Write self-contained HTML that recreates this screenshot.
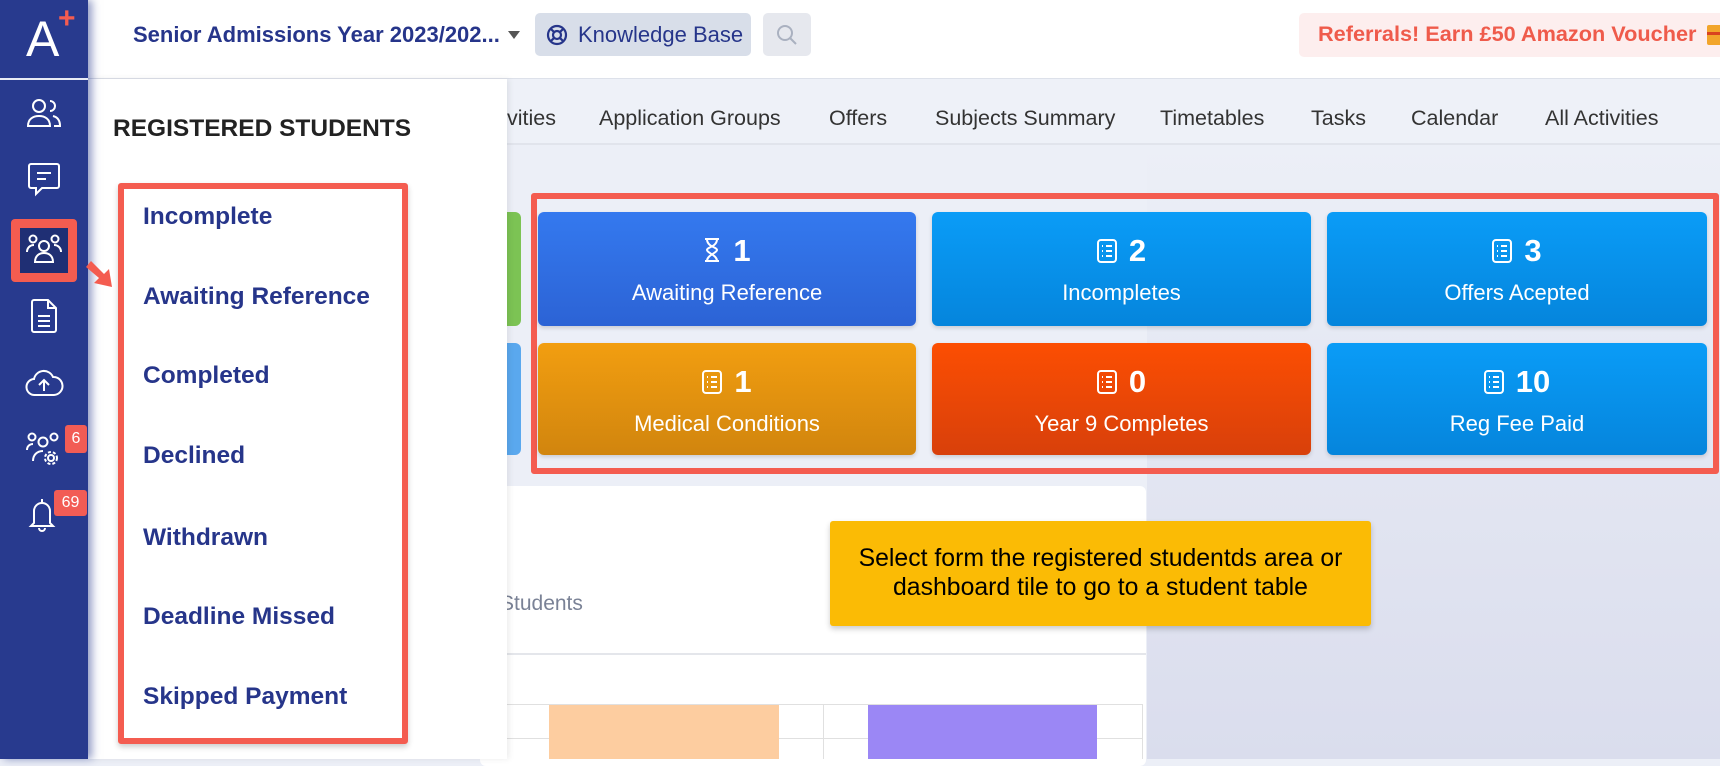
<!DOCTYPE html>
<html><head><meta charset="utf-8"><style>
*{box-sizing:border-box;margin:0;padding:0}
body{width:1720px;height:759px;overflow:hidden;font-family:"Liberation Sans",sans-serif;background:#eceff7;position:relative}
.abs{position:absolute}
.side{left:0;top:0;width:88px;height:759px;background:#283a8e;box-shadow:4px 0 8px rgba(40,58,142,.5)}
.side .sep{position:absolute;left:0;top:78px;width:88px;height:2px;background:#e8ebf5}
.ico{position:absolute;left:24px;width:40px;height:40px}
.badge{position:absolute;background:#f25c55;color:#fff;font-size:16px;text-align:center;border-radius:3px;line-height:22px}
.top{left:88px;top:0;width:1632px;height:79px;background:#fff;border-bottom:1px solid #dde1ea}
.tabs{left:507px;top:79px;width:1213px;height:66px;background:#eef1f8;border-bottom:2px solid #e1e4ec}
.tab{position:absolute;top:27px;font-size:21.5px;color:#333}
.panel{left:88px;top:79px;width:419px;height:680px;background:#fff;box-shadow:2px 0 6px rgba(0,0,0,.08)}
.item{position:absolute;left:55px;font-size:24.5px;font-weight:bold;color:#26358a}
.tile{position:absolute;border-radius:6px;color:#fff;text-align:center;box-shadow:0 2px 4px rgba(0,0,0,.15)}
.tile .n{position:absolute;top:21px;left:0;right:0;font-size:31px;font-weight:bold;line-height:36px}
.tile .l{position:absolute;top:68px;left:0;right:0;font-size:22px}
.tile svg{vertical-align:-2px;margin-right:12px}
</style></head><body>
<div class="abs" style="left:1146px;top:145px;width:574px;height:614px;background:linear-gradient(180deg,#eceff7,#dadded)"></div>
<div class="abs" style="left:507px;top:145px;width:640px;height:614px;background:#eceff7"></div>

<div class="abs top"></div>
<div class="abs" style="left:133px;top:22px;font-size:22px;font-weight:bold;color:#26358a">Senior Admissions Year 2023/202...</div>
<div class="abs" style="left:508px;top:31px;width:0;height:0;border-left:6px solid transparent;border-right:6px solid transparent;border-top:8px solid #555"></div>
<div class="abs" style="left:535px;top:13px;width:216px;height:43px;background:#d8dee9;border-radius:5px"></div>
<svg class="abs" style="left:545px;top:23px" width="24" height="24" viewBox="0 0 24 24" fill="none" stroke="#26358a" stroke-width="2.2"><circle cx="12" cy="12" r="9"/><circle cx="12" cy="12" r="4"/><path d="M5.6 5.6l3.6 3.6M18.4 5.6l-3.6 3.6M5.6 18.4l3.6-3.6M18.4 18.4l-3.6-3.6"/></svg>
<div class="abs" style="left:578px;top:22px;font-size:22px;color:#26358a">Knowledge Base</div>
<div class="abs" style="left:763px;top:13px;width:48px;height:43px;background:#e6e8ee;border-radius:5px"></div>
<svg class="abs" style="left:775px;top:23px" width="24" height="24" viewBox="0 0 24 24" fill="none" stroke="#aab1c0" stroke-width="2"><circle cx="10" cy="10" r="7"/><path d="M15 15l6 6"/></svg>
<div class="abs" style="left:1299px;top:13px;width:430px;height:44px;background:#fdeeee;border-radius:5px"></div>
<div class="abs" style="left:1318px;top:21px;font-size:21.7px;font-weight:bold;color:#ef5b4b;white-space:nowrap">Referrals! Earn £50 Amazon Voucher</div>
<div class="abs" style="left:1707px;top:25px;width:18px;height:20px;background:#f2a52b;border-radius:2px"></div>
<div class="abs" style="left:1707px;top:32px;width:18px;height:3px;background:#d9431f"></div>

<div class="abs tabs">
<div class="tab" style="left:0">vities</div>
<div class="tab" style="left:92px">Application Groups</div>
<div class="tab" style="left:322px">Offers</div>
<div class="tab" style="left:428px">Subjects Summary</div>
<div class="tab" style="left:653px">Timetables</div>
<div class="tab" style="left:804px">Tasks</div>
<div class="tab" style="left:904px">Calendar</div>
<div class="tab" style="left:1038px">All Activities</div>
</div>

<div class="abs" style="left:480px;top:212px;width:41px;height:114px;background:#7cc354;border-radius:6px"></div>
<div class="abs" style="left:480px;top:343px;width:41px;height:112px;background:#5aa8ee;border-radius:6px"></div>

<div class="abs" style="left:480px;top:486px;width:666px;height:280px;background:#fff;border-radius:6px"></div>
<div class="abs" style="left:500px;top:592px;font-size:21px;color:#7a8296">Students</div>
<div class="abs" style="left:480px;top:653px;width:666px;height:2px;background:#e4e6eb"></div>
<div class="abs" style="left:480px;top:704px;width:663px;height:1px;background:#e0e0e0"></div>
<div class="abs" style="left:480px;top:738px;width:663px;height:1px;background:#e0e0e0"></div>
<div class="abs" style="left:823px;top:704px;width:1px;height:55px;background:#e0e0e0"></div>
<div class="abs" style="left:1142px;top:704px;width:1px;height:55px;background:#e0e0e0"></div>
<div class="abs" style="left:549px;top:705px;width:230px;height:54px;background:#fdcda0"></div>
<div class="abs" style="left:868px;top:705px;width:229px;height:54px;background:#9b87f5"></div>

<div class="abs" style="left:531px;top:193px;width:1188px;height:281px;border:6px solid #f45c50;border-radius:3px"></div>
<div class="tile" style="left:538px;top:212px;width:378px;height:114px;background:linear-gradient(#3479ef,#2c63d5)"><div class="n"><svg width="18" height="26" viewBox="0 0 18 26" fill="none" stroke="#fff" stroke-width="2"><path d="M2 2h14M2 24h14M4 2c0 8 10 8 10 11S4 18 4 24M14 2c0 8-10 8-10 11s10 5 10 11"/></svg>1</div><div class="l">Awaiting Reference</div></div>
<div class="tile" style="left:932px;top:212px;width:379px;height:114px;background:linear-gradient(#0a9cf7,#0585dc)"><div class="n"><svg width="20" height="24" viewBox="0 0 20 24" fill="none" stroke="#fff" stroke-width="2"><rect x="1" y="1" width="18" height="22" rx="3"/><path d="M5 7h1M9 7h6M5 12h1M9 12h6M5 17h1M9 17h6"/></svg>2</div><div class="l">Incompletes</div></div>
<div class="tile" style="left:1327px;top:212px;width:380px;height:114px;background:linear-gradient(#0a9cf7,#0585dc)"><div class="n"><svg width="20" height="24" viewBox="0 0 20 24" fill="none" stroke="#fff" stroke-width="2"><rect x="1" y="1" width="18" height="22" rx="3"/><path d="M5 7h1M9 7h6M5 12h1M9 12h6M5 17h1M9 17h6"/></svg>3</div><div class="l">Offers Acepted</div></div>
<div class="tile" style="left:538px;top:343px;width:378px;height:112px;background:linear-gradient(#f29e10,#d1850e)"><div class="n"><svg width="20" height="24" viewBox="0 0 20 24" fill="none" stroke="#fff" stroke-width="2"><rect x="1" y="1" width="18" height="22" rx="3"/><path d="M5 7h1M9 7h6M5 12h1M9 12h6M5 17h1M9 17h6"/></svg>1</div><div class="l">Medical Conditions</div></div>
<div class="tile" style="left:932px;top:343px;width:379px;height:112px;background:linear-gradient(#fc4e02,#d8400b)"><div class="n"><svg width="20" height="24" viewBox="0 0 20 24" fill="none" stroke="#fff" stroke-width="2"><rect x="1" y="1" width="18" height="22" rx="3"/><path d="M5 7h1M9 7h6M5 12h1M9 12h6M5 17h1M9 17h6"/></svg>0</div><div class="l">Year 9 Completes</div></div>
<div class="tile" style="left:1327px;top:343px;width:380px;height:112px;background:linear-gradient(#0a9cf7,#0585dc)"><div class="n"><svg width="20" height="24" viewBox="0 0 20 24" fill="none" stroke="#fff" stroke-width="2"><rect x="1" y="1" width="18" height="22" rx="3"/><path d="M5 7h1M9 7h6M5 12h1M9 12h6M5 17h1M9 17h6"/></svg>10</div><div class="l">Reg Fee Paid</div></div>

<div class="abs" style="left:830px;top:521px;width:541px;height:105px;background:#fbbb05;border-radius:3px;box-shadow:0 3px 6px rgba(0,0,0,.2);text-align:center;font-size:24.8px;line-height:29px;padding-top:23px;color:#000;white-space:nowrap">Select form the registered studentds area or<br>dashboard tile to go to a student table</div>

<svg class="abs" style="left:460px;top:318px" width="40" height="26" viewBox="0 0 40 26"><path d="M2 10h20V3l14 10-14 10v-7H2z" fill="#f45c50"/></svg>

<div class="abs panel">
<div class="abs" style="left:25px;top:36px;font-size:24.5px;font-weight:bold;color:#222">REGISTERED STUDENTS</div>
<div class="abs" style="left:30px;top:104px;width:290px;height:561px;border:6px solid #f45c50;border-radius:3px;box-shadow:0 3px 6px rgba(0,0,0,.2)"></div>
<div class="item" style="top:124px">Incomplete</div>
<div class="item" style="top:204px">Awaiting Reference</div>
<div class="item" style="top:283px">Completed</div>
<div class="item" style="top:363px">Declined</div>
<div class="item" style="top:445px">Withdrawn</div>
<div class="item" style="top:524px">Deadline Missed</div>
<div class="item" style="top:604px">Skipped Payment</div>
</div>

<div class="abs side">
<div class="abs" style="left:26px;top:14px;font-size:50px;color:#fff;line-height:50px">A</div>
<div class="abs" style="left:58px;top:4px;font-size:30px;color:#f45c50;font-weight:bold;line-height:30px">+</div>
<div class="sep"></div>
<svg class="ico" style="top:93px" viewBox="0 0 40 40" fill="none" stroke="#fff" stroke-width="2"><circle cx="15" cy="13" r="6"/><path d="M26 8a5 5 0 1 1 0 10"/><path d="M4 33c0-7 5-10 11-10s11 3 11 10z"/><path d="M29 23c4 1 7 4 7 10h-6"/></svg>
<svg class="ico" style="top:158px" viewBox="0 0 40 40" fill="none" stroke="#fff" stroke-width="2"><path d="M7 6h26a2 2 0 0 1 2 2v20a2 2 0 0 1-2 2H18l-6 6v-6H7a2 2 0 0 1-2-2V8a2 2 0 0 1 2-2z"/><path d="M13 15h14M13 21h9"/></svg>
<div class="abs" style="left:11px;top:219px;width:66px;height:63px;background:#f45c50;border-radius:4px"></div>
<div class="abs" style="left:20px;top:228px;width:48px;height:45px;background:#1f2f74"></div>
<svg class="ico" style="top:230px" viewBox="0 0 40 40" fill="none" stroke="#fff" stroke-width="2"><circle cx="20" cy="16" r="5"/><circle cx="9" cy="9" r="3.5"/><circle cx="31" cy="9" r="3.5"/><path d="M11 32c0-6 4-9 9-9s9 3 9 9z"/><path d="M3 22c0-4 3-7 7-7M37 22c0-4-3-7-7-7"/></svg>
<svg class="ico" style="top:296px" viewBox="0 0 40 40" fill="none" stroke="#fff" stroke-width="2"><path d="M10 4h14l8 8v22a2 2 0 0 1-2 2H10a2 2 0 0 1-2-2V6a2 2 0 0 1 2-2z"/><path d="M24 4v8h8M14 20h12M14 25h12M14 30h12"/></svg>
<svg class="ico" style="top:363px" viewBox="0 0 40 40" fill="none" stroke="#fff" stroke-width="2"><path d="M11 32a8 8 0 0 1-1-16 10 10 0 0 1 19-2 8 8 0 0 1 1 18z"/><path d="M20 28V17M15 22l5-5 5 5"/></svg>
<svg class="ico" style="top:428px" viewBox="0 0 40 40" fill="none" stroke="#fff" stroke-width="2"><circle cx="19" cy="14" r="4.5"/><circle cx="8" cy="9" r="3.5"/><circle cx="30" cy="9" r="3.5"/><path d="M9 33c0-6 4-10 10-10"/><path d="M3 22c0-4 3-6 6-6"/><circle cx="27" cy="30" r="3"/><circle cx="27" cy="30" r="6" stroke-dasharray="3 2"/></svg>
<div class="badge" style="left:65px;top:425px;width:22px;height:28px;line-height:28px">6</div>
<svg class="ico" style="top:493px" viewBox="0 0 40 40" fill="none" stroke="#fff" stroke-width="2"><path d="M10 30V18a8 8 0 0 1 16 0v12l3 3H7z"/><path d="M18 6v4M15 35a3 3 0 0 0 6 0"/></svg>
<div class="badge" style="left:54px;top:490px;width:33px;height:26px;line-height:26px">69</div>
</div>
<svg class="abs" style="left:82px;top:258px" width="36" height="36" viewBox="0 0 36 36"><path d="M4 9l13 11-5 5 18 4-3-18-5 5L9 3z" fill="#f45c50"/></svg>
</body></html>
